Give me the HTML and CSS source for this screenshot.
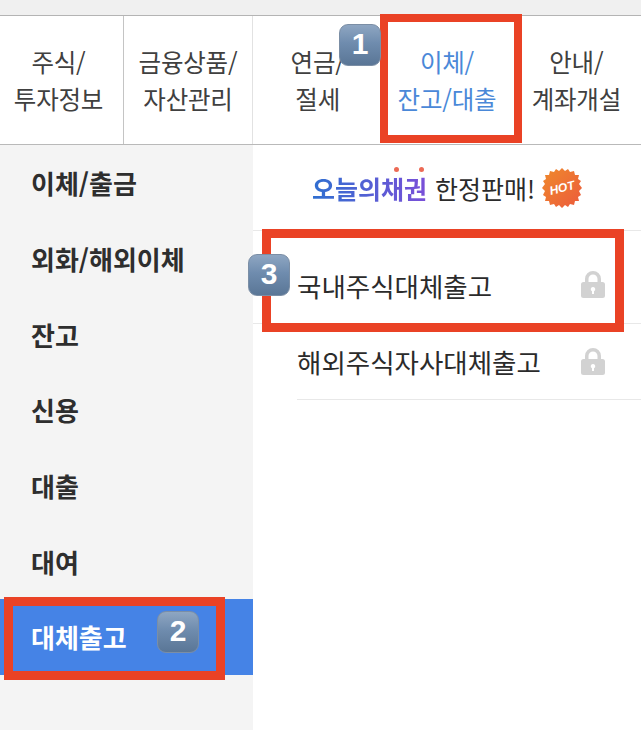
FILE: index.html
```html
<!DOCTYPE html>
<html lang="ko">
<head>
<meta charset="utf-8">
<title>대체출고</title>
<link rel="stylesheet" href="styles.css">
</head>
<body>
<div class="page">
  <div class="strip"></div>
  <nav class="tabs">
    <div class="tab tab-first">주식/<br>투자정보</div>
    <div class="tab tab-second">금융상품/<br>자산관리</div>
    <div class="tab">연금/<br>절세</div>
    <div class="tab tab-active">이체/<br>잔고/대출</div>
    <div class="tab">안내/<br>계좌개설</div>
  </nav>
  <div class="main">
    <aside class="side">
      <div class="side-item">이체/출금</div>
      <div class="side-item">외화/해외이체</div>
      <div class="side-item">잔고</div>
      <div class="side-item">신용</div>
      <div class="side-item">대출</div>
      <div class="side-item">대여</div>
      <div class="side-item side-active">대체출고</div>
    </aside>
    <section class="content">
      <div class="promo">
        <span class="promo-title">오늘의채권<i class="dot dot-a"></i><i class="dot dot-b"></i></span>
        <span class="promo-text">한정판매!</span>
        <svg class="hot" viewBox="0 0 40 40" width="40" height="40" aria-hidden="true">
          <defs><linearGradient id="hotg" x1="0" y1="0" x2="1" y2="1"><stop offset="0" stop-color="#ef8a2c"/><stop offset="1" stop-color="#ec5a3c"/></linearGradient></defs>
          <polygon fill="url(#hotg)" points="20,0 23,3 26,1 28,4 32,3 33,7 37,7 36,11 39,13 37,16 40,20 37,23 39,27 36,29 37,33 33,33 32,37 28,36 26,39 23,37 20,40 17,37 14,39 12,36 8,37 7,33 3,33 4,29 1,27 3,23 0,20 3,16 1,13 4,11 3,7 7,7 8,3 12,4 14,1 17,3"/>
          <text class="hot-text" x="20" y="24" text-anchor="middle" transform="rotate(-14 20 20)">HOT</text>
        </svg>
      </div>
      <div class="row row-first">
        <span>국내주식대체출고</span>
        <svg class="lock" viewBox="0 0 24 28" width="24" height="28" aria-hidden="true"><path fill="#d2d2d2" fill-rule="evenodd" d="M4 11V8a8 8 0 0 1 16 0v3h1.5a2.5 2.5 0 0 1 2.5 2.5v11a2.5 2.5 0 0 1-2.5 2.5h-19A2.5 2.5 0 0 1 0 24.500v-11A2.500 2.500 0 0 1 2.500 11zM7.500 11h9V8a4.500 4.500 0 0 0-9 0zM12 16a2.200 2.200 0 0 0-1 4.200V23h2v-2.800A2.200 2.200 0 0 0 12 16z"/></svg>
      </div>
      <div class="row row-second">
        <span>해외주식자사대체출고</span>
        <svg class="lock" viewBox="0 0 24 28" width="24" height="28" aria-hidden="true"><path fill="#d2d2d2" fill-rule="evenodd" d="M4 11V8a8 8 0 0 1 16 0v3h1.500a2.500 2.500 0 0 1 2.500 2.500v11a2.500 2.500 0 0 1-2.500 2.500h-19A2.500 2.500 0 0 1 0 24.500v-11A2.500 2.500 0 0 1 2.500 11zM7.500 11h9V8a4.500 4.500 0 0 0-9 0zM12 16a2.200 2.200 0 0 0-1 4.200V23h2v-2.800A2.200 2.200 0 0 0 12 16z"/></svg>
      </div>
    </section>
  </div>
  <div class="mark mark-tab"></div>
  <div class="mark mark-side"></div>
  <div class="mark mark-row"></div>
  <div class="badge badge-1">1</div>
  <div class="badge badge-2">2</div>
  <div class="badge badge-3">3</div>
</div>
</body>
</html>
```
FILE: styles.css
```css
* { box-sizing: border-box; }
html, body { margin: 0; padding: 0; }
body {
  background: #fff;
  font-family: "Noto Sans CJK KR", "Noto Sans", sans-serif;
}
.page {
  position: relative;
  width: 641px;
  height: 730px;
  overflow: hidden;
}
.strip {
  height: 15px;
  background: #f0f0f0;
  border-bottom: 1px solid #b4b4b4;
  height: 16px;
}
.tabs {
  display: flex;
  height: 129px;
  border-bottom: 1px solid #b9b9b9;
}
.tab {
  flex: 1 1 0;
  display: flex;
  flex-direction: column;
  justify-content: center;
  text-align: center;
  font-size: 24.500px;
  line-height: 37px;
  letter-spacing: -0.2px;
  color: #404040;
  padding-bottom: 2px;
  display: block;
  padding-top: 27px;
}
.tab-first {
  flex: 0 0 124px;
  padding-right: 6px;
  border-right: 1px solid #c4c4c4;
}
.tab-second {
  flex: 0 0 129px;
  border-right: 1px solid #e2e2e2;
}
.tab-active { color: #4a88d8; }
.main {
  display: flex;
  height: 585px;
}
.side {
  flex: 0 0 253px;
  background: #f4f4f4;
  padding-top: 0;
}
.side-item {
  height: 75.700px;
  padding-left: 31px;
  display: flex;
  align-items: center;
  font-size: 26px;
  font-weight: 700;
  color: #2e2e2e;
}
.side-active {
  background: #4583e6;
  color: #fff;
}
.content { flex: 1 1 0; }
.promo {
  height: 86px;
  border-bottom: 1px solid #e8e8e8;
  display: flex;
  align-items: center;
  justify-content: center;
  gap: 8px;
  padding-right: 0;
  font-size: 25px;
  color: #2b2b2b;
}
.promo-title {
  position: relative;
  font-weight: 700;
  background: linear-gradient(90deg, #2f6fd0, #7a4fd8);
  -webkit-background-clip: text;
  background-clip: text;
  color: transparent;
}
.dot {
  position: absolute;
  top: -3px;
  width: 5px;
  height: 5px;
  border-radius: 50%;
  background: #ec6a55;
}
.dot-a { left: 82px; }
.dot-b { left: 107px; }
.hot { flex: none; margin-left: -1px; }
.hot-text {
  font-family: "Liberation Sans", sans-serif;
  font-size: 12px;
  font-weight: 700;
  font-style: italic;
  fill: #fff;
}
.row {
  display: flex;
  align-items: center;
  justify-content: space-between;
  font-size: 26.500px;
  color: #2b2b2b;
  margin-left: 44px;
  padding-right: 36px;
}
.row-first {
  height: 93px;
  margin-left: 0;
  padding-left: 44px;
  padding-top: 16px;
  border-bottom: 1px solid #e8e8e8;
}
.row-second {
  height: 76px;
  border-bottom: 1px solid #e8e8e8;
}
.lock { flex: none; }
.mark {
  position: absolute;
  border: 8px solid #ea4225;
}
.mark-tab { left: 380px; top: 14px; width: 142px; height: 129px; }
.mark-side { left: 4px; top: 597px; width: 221px; height: 83px; border-width: 9px; }
.mark-row { left: 262px; top: 229px; width: 362px; height: 103px; border-width: 9px; }
.badge {
  position: absolute;
  width: 42px;
  height: 42px;
  border-radius: 9px;
  background: linear-gradient(180deg, #8ea6c2 0%, #6f8cae 45%, #5a7696 100%);
  border: 1px solid #7b8ea5;
  color: #fff;
  font-family: "Liberation Sans", sans-serif;
  font-weight: 700;
  font-size: 30px;
  line-height: 38px;
  text-align: center;
}
.badge-1 { left: 339px; top: 24px; }
.badge-2 { left: 157px; top: 611px; }
.badge-3 { left: 248px; top: 254px; }
```
